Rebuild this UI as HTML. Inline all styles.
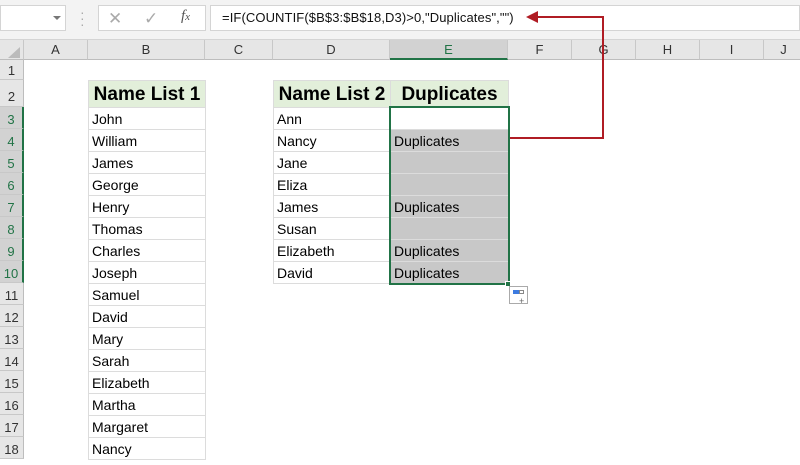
<!DOCTYPE html><html><head><style>
body{margin:0;width:800px;height:465px;overflow:hidden;background:#fff;font-family:"Liberation Sans",Arial,sans-serif;position:relative}
.a{position:absolute;box-sizing:border-box}
.ch{position:absolute;top:40px;height:20px;background:#e6e6e6;border-right:1px solid #c8c8c8;border-bottom:1px solid #bdbdbd;font-size:13px;color:#333;text-align:center;line-height:20px;box-sizing:border-box}
.rh{position:absolute;left:0;width:24px;background:#e6e6e6;border-bottom:1px solid #c8c8c8;border-right:1px solid #bdbdbd;font-size:13px;color:#333;text-align:center;box-sizing:border-box}
.c{position:absolute;box-sizing:border-box;border:1px solid #dcdcdc;font-size:14px;padding-left:3px;line-height:22px;white-space:nowrap}
.h{background:#e2efda;font-weight:bold;font-size:19px;text-align:center;padding:0;line-height:27px}
.g{background:#c8c8c8}
</style></head><body>
<div class="a" style="left:0;top:0;width:800px;height:40px;background:#f3f3f3;border-bottom:1px solid #d4d4d4"></div>
<div class="a" style="left:0;top:5px;width:66px;height:26px;background:#fff;border:1px solid #d4d4d4"></div>
<div class="a" style="left:53px;top:16px;width:0;height:0;border-left:4px solid transparent;border-right:4px solid transparent;border-top:4px solid #777"></div>
<div class="a" style="left:80px;top:9px;font-size:14px;color:#aaa;line-height:6px">·<br>·<br>·</div>
<div class="a" style="left:98px;top:5px;width:108px;height:26px;background:#fff;border:1px solid #d4d4d4"></div>
<div class="a" style="left:108px;top:9px;font-size:17px;color:#aaa">✕</div>
<div class="a" style="left:144px;top:9px;font-size:17px;color:#aaa">✓</div>
<div class="a" style="left:181px;top:8px;font-size:15px;color:#555;font-style:italic;font-family:'Liberation Serif',serif">f<span style="font-size:11px">x</span></div>
<div class="a" style="left:210px;top:5px;width:590px;height:26px;background:#fff;border:1px solid #d4d4d4"></div>
<div class="a" style="left:222px;top:10px;font-size:13px;letter-spacing:0.1px;color:#111">=IF(COUNTIF($B$3:$B$18,D3)&gt;0,"Duplicates","")</div>
<div class="ch" style="left:0;width:24px;background:#e6e6e6"></div>
<div class="a" style="left:8px;top:47px;width:0;height:0;border-left:12px solid transparent;border-bottom:11px solid #bbb"></div>
<div class="ch" style="left:24px;width:64px">A</div>
<div class="ch" style="left:88px;width:117px">B</div>
<div class="ch" style="left:205px;width:68px">C</div>
<div class="ch" style="left:273px;width:117px">D</div>
<div class="ch" style="left:390px;width:118px;background:#d2d2d2;border-bottom:2px solid #217346;color:#217346">E</div>
<div class="ch" style="left:508px;width:64px">F</div>
<div class="ch" style="left:572px;width:64px">G</div>
<div class="ch" style="left:636px;width:64px">H</div>
<div class="ch" style="left:700px;width:64px">I</div>
<div class="ch" style="left:764px;width:40px">J</div>
<div class="rh" style="top:60px;height:20px;line-height:22px">1</div>
<div class="rh" style="top:80px;height:27px;line-height:34px">2</div>
<div id="rows"></div>
<script>
var h='';
for(var r=3;r<=18;r++){var t=107+(r-3)*22;var s=r<=10?'background:#d2d2d2;color:#217346;border-right:2px solid #217346;':'';h+='<div class="rh" style="top:'+t+'px;height:22px;line-height:26px;'+s+'">'+r+'</div>';}
var B=['John','William','James','George','Henry','Thomas','Charles','Joseph','Samuel','David','Mary','Sarah','Elizabeth','Martha','Margaret','Nancy'];
var D=['Ann','Nancy','Jane','Eliza','James','Susan','Elizabeth','David'];
var E=['','Duplicates','','','Duplicates','','Duplicates','Duplicates'];
B.forEach(function(n,i){h+='<div class="c" style="left:88px;top:'+(107+i*22)+'px;width:118px;height:23px">'+n+'</div>';});
D.forEach(function(n,i){h+='<div class="c" style="left:273px;top:'+(107+i*22)+'px;width:118px;height:23px">'+n+'</div>';
h+='<div class="c'+(i>0?' g':'')+'" style="left:390px;top:'+(107+i*22)+'px;width:119px;height:23px">'+E[i]+'</div>';});
document.getElementById('rows').innerHTML=h;
</script>
<div class="c h" style="left:88px;top:80px;width:118px;height:28px">Name List 1</div>
<div class="c h" style="left:273px;top:80px;width:118px;height:28px">Name List 2</div>
<div class="c h" style="left:390px;top:80px;width:119px;height:28px">Duplicates</div>
<div class="a" style="left:389px;top:106px;width:121px;height:179px;border:2px solid #217346"></div>
<div class="a" style="left:505px;top:281px;width:6px;height:6px;background:#217346;border:1px solid #fff"></div>
<div class="a" style="left:509px;top:286px;width:19px;height:18px;border:1px solid #aaa;background:#fff"></div>
<div class="a" style="left:513px;top:290px;width:6px;height:4px;background:#3d7be0"></div>
<div class="a" style="left:519px;top:290px;width:5px;height:4px;border:1px solid #888"></div>
<div class="a" style="left:519px;top:297px;font-size:9px;color:#666;line-height:8px">+</div>
<svg class="a" style="left:0;top:0" width="800" height="465"><polyline points="510,138 603,138 603,17 536,17" fill="none" stroke="#b01c24" stroke-width="2"/><polygon points="526,17 538,11 538,23" fill="#b01c24"/></svg>
</body></html>
